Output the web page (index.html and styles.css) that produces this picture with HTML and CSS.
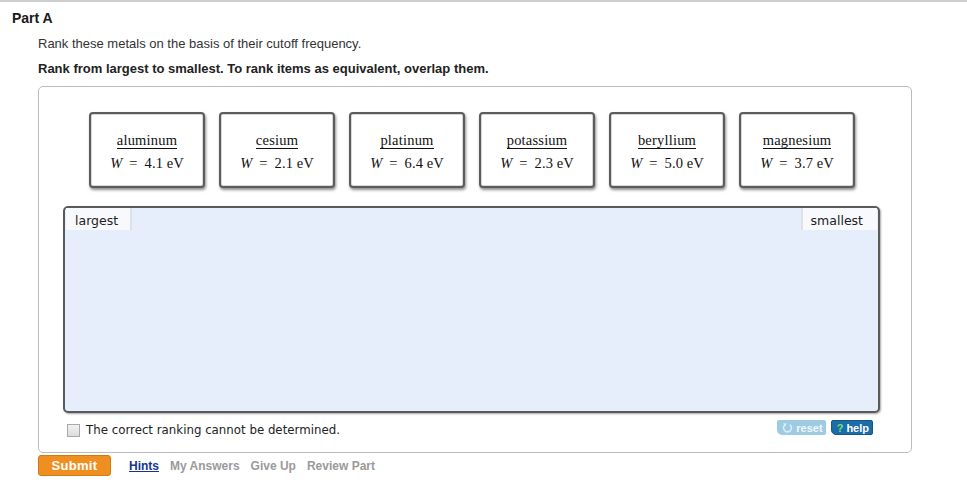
FILE: index.html
```html
<!DOCTYPE html>
<html>
<head>
    <title>Part A</title>
    <link rel="stylesheet" href="styles.css">
</head>
<body>
    <div class="top-rule"></div>
    <h3 class="part-title">Part A</h3>

    <div class="part-body">
        <p class="intro">Rank these metals on the basis of their cutoff frequency.</p>
        <p class="instructions">Rank from largest to smallest. To rank items as equivalent, overlap them.</p>

        <!-- Ranking widget -->
        <div class="rank-panel">
            <div class="card-row">
                <div class="card"><span class="metal">aluminum</span><span class="work"><i>W</i><span class="eq">=</span>4.1&nbsp;eV</span></div>
                <div class="card"><span class="metal">cesium</span><span class="work"><i>W</i><span class="eq">=</span>2.1&nbsp;eV</span></div>
                <div class="card"><span class="metal">platinum</span><span class="work"><i>W</i><span class="eq">=</span>6.4&nbsp;eV</span></div>
                <div class="card"><span class="metal">potassium</span><span class="work"><i>W</i><span class="eq">=</span>2.3&nbsp;eV</span></div>
                <div class="card"><span class="metal">beryllium</span><span class="work"><i>W</i><span class="eq">=</span>5.0&nbsp;eV</span></div>
                <div class="card"><span class="metal">magnesium</span><span class="work"><i>W</i><span class="eq">=</span>3.7&nbsp;eV</span></div>
            </div>

            <div class="drop-zone">
                <div class="zone-labels">
                    <span class="zone-label zone-left">largest</span>
                    <span class="zone-label zone-right">smallest</span>
                </div>
            </div>

            <div class="panel-footer">
                <label class="cannot">
                    <span class="checkbox"></span>
                    The correct ranking cannot be determined.
                </label>
                <div class="tools">
                    <span class="tool tool-reset">
                        <svg width="11" height="11" viewBox="0 0 11 11">
                            <path d="M3.2 2.6 A4 4 0 1 0 7.8 2.6" fill="none" stroke="#d8eefa" stroke-width="1.6"/>
                            <path d="M1.2 1.2 L4.6 1.6 L3.2 4.6 Z" fill="#d8eefa"/>
                        </svg>
                        reset
                    </span>
                    <span class="tool tool-help"><b class="q">?</b> help</span>
                </div>
            </div>
        </div>

        <div class="actions">
            <button class="submit">Submit</button>
            <a href="#" class="link-hints">Hints</a>
            <span class="link-off">My Answers</span>
            <span class="link-off">Give Up</span>
            <span class="link-off">Review Part</span>
        </div>
    </div>
</body>
</html>
```

FILE: styles.css
```css
body {
    margin: 0;
    font-family: "Liberation Sans", Arial, sans-serif;
    color: #222;
    background: white;
}
.top-rule {
    height: 2px;
    background-color: #cfcfcf;
}
.part-title {
    margin: 8px 0 0 12px;
    font-size: 14px;
    line-height: 16px;
    font-weight: bold;
    color: #1a1a1a;
}
.part-body {
    margin-left: 38px;
    width: 874px;
}
.intro {
    margin: 10px 0 0;
    font-size: 13px;
    line-height: 16px;
    color: #333;
}
.instructions {
    margin: 9px 0 0;
    font-size: 13px;
    line-height: 16px;
    font-weight: bold;
    color: #222;
}
.rank-panel {
    margin-top: 9px;
    height: 367px;
    border: 1px solid #bcbcbc;
    border-radius: 5px;
    box-sizing: border-box;
}
.card-row {
    display: flex;
    gap: 14px;
    padding: 25px 0 0 50px;
}
.card {
    width: 116px;
    height: 76px;
    box-sizing: border-box;
    border: 2px solid #5c5c5c;
    border-radius: 4px;
    background-color: white;
    box-shadow: 1px 2px 3px rgba(0, 0, 0, 0.45), inset 0 0 0 1px #d8d8d8;
    display: flex;
    flex-direction: column;
    align-items: center;
    font-family: "Liberation Serif", "Times New Roman", serif;
    font-size: 14.5px;
    color: #111;
}
.metal {
    margin-top: 18px;
    line-height: 16px;
    letter-spacing: 0.2px;
    border-bottom: 1px solid #111;
}
.work {
    margin-top: 6px;
    line-height: 16px;
    letter-spacing: 0.1px;
}
.eq {
    margin: 0 7px;
}
.drop-zone {
    margin: 18px 0 0 24px;
    width: 817px;
    height: 207px;
    box-sizing: border-box;
    border: 2px solid #5a5a5a;
    border-radius: 5px;
    background-color: #e6edfb;
    box-shadow: 1px 1px 2px rgba(0, 0, 0, 0.35);
    padding: 0 1px;
}
.zone-labels {
    display: flex;
    justify-content: space-between;
}
.zone-label {
    height: 22px;
    line-height: 25px;
    padding: 0 8px;
    background-color: #f7f9fd;
    font-family: "DejaVu Sans", Verdana, sans-serif;
    font-size: 12.5px;
    color: #222;
}
.zone-left {
    border-right: 2px solid #dde2ea;
    padding-left: 9px;
    padding-right: 12px;
}
.zone-right {
    border-left: 2px solid #dde2ea;
    padding-left: 8px;
    padding-right: 14px;
}
.panel-footer {
    display: flex;
    justify-content: space-between;
    align-items: flex-start;
    margin: 7px 38px 0 28px;
}
.cannot {
    display: flex;
    align-items: center;
    gap: 6px;
    margin-top: 3px;
    font-family: "DejaVu Sans", Verdana, sans-serif;
    font-size: 11.8px;
    color: #222;
}
.checkbox {
    width: 11px;
    height: 11px;
    border: 1px solid #a8a8a8;
    background: linear-gradient(#f2f2f2, #dcdcdc);
}
.tools {
    display: flex;
    gap: 5px;
}
.tool {
    display: flex;
    align-items: center;
    gap: 3px;
    height: 15px;
    padding: 0 4px;
    border-radius: 2px 2px 2px 5px;
    font-size: 11px;
    font-weight: bold;
    color: white;
}
.tool-reset {
    background-color: #9ecbe2;
    color: #eef7fc;
    padding-left: 5px;
    padding-right: 3px;
}
.tool-help {
    background-color: #1c6ca8;
    border: 1px solid #15578a;
    height: 13px;
    padding: 0 3px 0 5px;
}
.q {
    color: #6fe07a;
}
.actions {
    display: flex;
    align-items: center;
    margin-top: 2px;
    font-size: 12px;
    font-weight: bold;
}
.submit {
    width: 73px;
    height: 21px;
    padding: 0;
    margin-right: 18px;
    background-color: #ef8f1f;
    border: 1px solid #d27a12;
    border-radius: 3px;
    font-family: "Liberation Sans", Arial, sans-serif;
    font-size: 13px;
    font-weight: bold;
    color: white;
    letter-spacing: 0.3px;
}
.link-hints {
    color: #13348f;
    text-decoration: underline;
    margin-right: 11px;
}
.link-off {
    color: #9a9a9a;
    margin-right: 11px;
}
```
